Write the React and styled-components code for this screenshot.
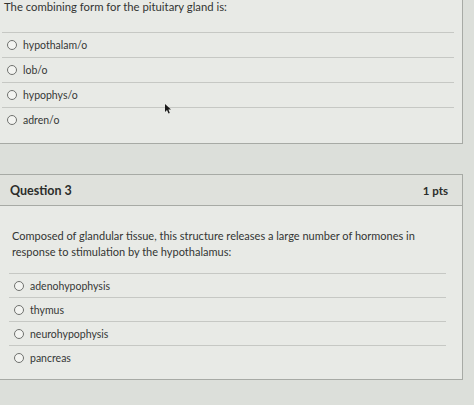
import React from 'react';
import styled, { createGlobalStyle } from 'styled-components';

const GlobalStyle = createGlobalStyle`
  body {
    margin: 0;
    background: #dcdfda;
    font-family: Lato, "Open Sans", sans-serif;
    color: #333533;
  }
`;

const Page = styled.div`
  position: relative;
  height: 405px;
  overflow: hidden;
`;

const Card = styled.section`
  margin: ${(p) => p.$top}px 11px 0 -2px;
  background: #e8eae6;
  border: 1px solid #a7aaa5;
  border-top: ${(p) => (p.$noTop ? 'none' : '1px solid #a7aaa5')};
  padding-bottom: ${(p) => p.$padBottom}px;
`;

const Header = styled.div`
  display: flex;
  justify-content: space-between;
  align-items: center;
  height: 30px;
  padding: 0 14px 0 11px;
  background: #dfe1dc;
  border-bottom: 1px solid #a7aaa5;
`;

const Title = styled.h3`
  margin: 0;
  font-size: 12.5px;
  font-weight: 700;
  color: #2b2d2b;
`;

const Points = styled.span`
  font-size: 11.5px;
  font-weight: 700;
  color: #2b2d2b;
`;

const QuestionText = styled.p`
  margin: 0;
  padding: ${(p) => p.$pad};
  font-size: ${(p) => p.$size}px;
  line-height: ${(p) => p.$lh}px;
`;

const Answers = styled.ul`
  list-style: none;
  margin: 0 ${(p) => p.$right}px 0 ${(p) => p.$left}px;
  padding: 0;
`;

const Answer = styled.li`
  display: flex;
  align-items: center;
  gap: 6px;
  height: ${(p) => p.$h}px;
  padding-left: 5px;
  border-top: 1px solid #c6c8c4;
  font-size: 10.5px;
  color: #363836;
`;

const Radio = styled.span`
  width: 8px;
  height: 8px;
  border-radius: 50%;
  border: 1px solid #6f716e;
  background: #f3f4f1;
  flex: none;
`;

const Cursor = styled.svg`
  position: absolute;
  left: 165px;
  top: 104px;
`;

const topAnswers = ['hypothalam/o', 'lob/o', 'hypophys/o', 'adren/o'];
const bottomAnswers = ['adenohypophysis', 'thymus', 'neurohypophysis', 'pancreas'];

export default function App() {
  return (
    <Page>
      <GlobalStyle />
      <Card $top={0} $noTop $padBottom={11}>
        <QuestionText $pad="0 5px 19px 5px" $lh={13} $size={11.3}>
          The combining form for the pituitary gland is:
        </QuestionText>
        <Answers $left={3} $right={8}>
          {topAnswers.map((a) => (
            <Answer key={a} $h={24}>
              <Radio />
              {a}
            </Answer>
          ))}
        </Answers>
      </Card>
      <Card $top={30} $padBottom={10}>
        <Header>
          <Title>Question 3</Title>
          <Points>1 pts</Points>
        </Header>
        <QuestionText $pad="22px 12px 13px 13px" $lh={16} $size={11}>
          Composed of glandular tissue, this structure releases a large number of hormones in
          response to stimulation by the hypothalamus:
        </QuestionText>
        <Answers $left={10} $right={16}>
          {bottomAnswers.map((a) => (
            <Answer key={a} $h={23}>
              <Radio />
              {a}
            </Answer>
          ))}
        </Answers>
      </Card>
      <Cursor width="7" height="10" viewBox="0 0 7 10">
        <path d="M0 0 L0 8 L2 6 L3.5 9.5 L4.8 9 L3.4 5.6 L6 5.6 Z" fill="#1a1a1a" />
      </Cursor>
    </Page>
  );
}
